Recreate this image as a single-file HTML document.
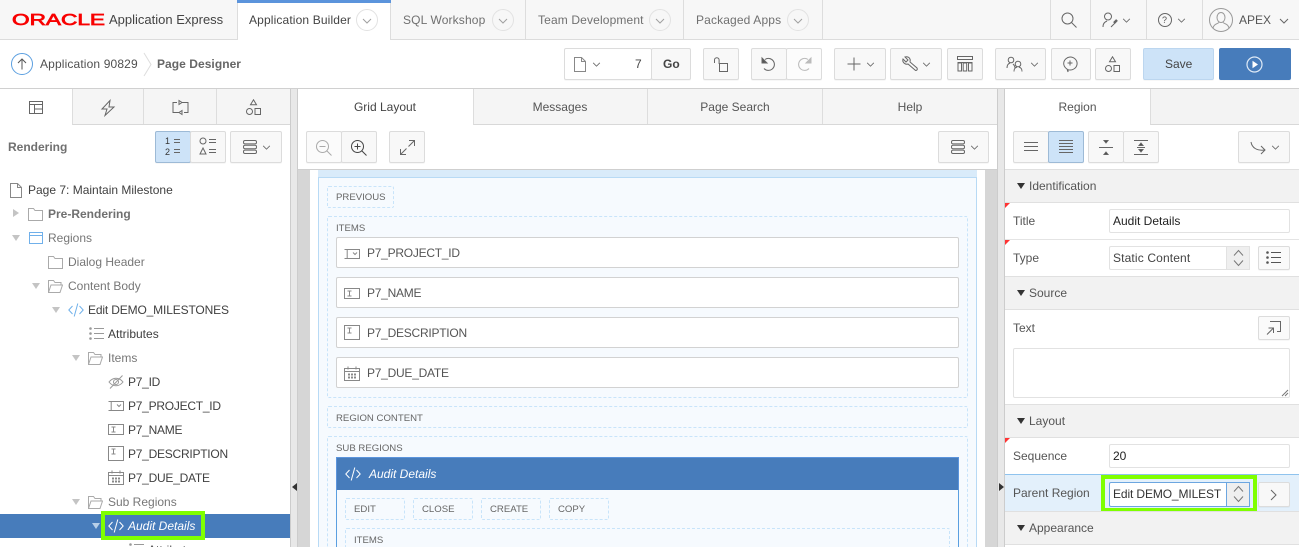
<!DOCTYPE html>
<html><head><meta charset="utf-8"><title>Page Designer</title>
<style>
*{box-sizing:border-box}
html,body{margin:0;padding:0;width:1299px;height:547px;overflow:hidden;background:#fff}
body{position:relative;font-family:"Liberation Sans",sans-serif;font-size:12px;color:#404040}
.a,.t,.b,svg.i,.d{position:absolute}
.a{display:block}
.t{white-space:nowrap;line-height:16px;height:16px}
.b{background:#f8f8f8;border:1px solid #dcdcdc;border-radius:2px;box-shadow:0 1px 0 rgba(0,0,0,.03)}
.on{background:#cde3f8;border-color:#9dbad6}
svg.i{fill:none;stroke:#666;stroke-width:1;overflow:visible}
.d{border:1px dashed #c8e4fa;border-radius:2px}
.l{position:absolute;font-size:9.6px;line-height:12px;color:#666;white-space:nowrap}
.tab{position:absolute;text-align:center;line-height:16px;color:#555}
.arr{position:absolute;width:0;height:0}
.dn{border-left:4.5px solid transparent;border-right:4.5px solid transparent;border-top:6px solid #c4c4c4}
.rt{border-top:4.5px solid transparent;border-bottom:4.5px solid transparent;border-left:6px solid #c4c4c4}
.tr{color:#404040}.gr{color:#777}
.cap{letter-spacing:-.25px}
.nav{letter-spacing:.14px}
.row{position:absolute;left:336px;width:623px;height:31px;background:#fff;border:1px solid #d2d2d2;border-radius:2px}
.sec{position:absolute;left:1005px;width:294px;height:34px;background:#f2f2f2;border-top:1px solid #e0e0e0;border-bottom:1px solid #e0e0e0}
.sect{position:absolute;left:1029px;color:#555;line-height:16px}
.sa{position:absolute;left:1017px;border-left:4px solid transparent;border-right:4px solid transparent;border-top:6px solid #333;width:0;height:0}
.in{position:absolute;background:#fff;border:1px solid #e2e2e2;border-radius:2px;height:24px;line-height:22px;padding-left:3px;color:#222}
.lab{position:absolute;left:1013px;color:#555;line-height:16px}
.red{position:absolute;left:1005px;width:0;height:0;border-top:5px solid #f33;border-right:5px solid transparent}
.lite{color:#a0a0a0}
.drk{color:#666}
</style></head><body>

<svg width="0" height="0" style="position:absolute">
<defs>
<symbol id="chev" viewBox="0 0 10 6"><path d="M1 1l4 4 4-4" fill="none" stroke="currentColor"/></symbol>
<symbol id="page" viewBox="0 0 12 15"><path d="M.5.5h7l4 4v10H.5zM7.500.5v4h4" fill="none" stroke="#888"/></symbol>
<symbol id="folder" viewBox="0 0 15 13"><path d="M.5 12.500V.5h5l1.500 2h7.500v10z" fill="none" stroke="#aaa"/></symbol>
<symbol id="ofolder" viewBox="0 0 15 13"><path d="M.5 12.500V.5h5l1.500 2h6v2.500M.5 12.500l2.500-7.500h11.500l-2.500 7.500z" fill="none" stroke="#aaa"/></symbol>
<symbol id="code" viewBox="0 0 16 14"><path d="M4.500 3L.8 7l3.700 4M11.500 3l3.700 4-3.700 4M9.800.5L6.200 13.500" fill="none" stroke="currentColor"/></symbol>
<symbol id="list" viewBox="0 0 15 13"><path d="M5 1.500h10M5 6.500h10M5 11.500h10" fill="none" stroke="currentColor"/><circle cx="1.500" cy="1.500" r="1.300" fill="currentColor"/><circle cx="1.500" cy="6.500" r="1.300" fill="currentColor"/><circle cx="1.500" cy="11.500" r="1.300" fill="currentColor"/></symbol>
<symbol id="sel" viewBox="0 0 16 10"><path d="M6 .5h9.500v9H6" fill="none" stroke="#888"/><path d="M.5.5h5.500M3.200.5v9M.5 9.500h5.500" fill="none" stroke="#888"/><path d="M9 3.500l2 2 2-2" fill="none" stroke="#888"/></symbol>
<symbol id="txt" viewBox="0 0 16 11"><path d="M.5.5h15v10H.5z" fill="none" stroke="#888"/><path d="M3.500 3h4M5.500 3v5M3.500 8h4" fill="none" stroke="#888"/></symbol>
<symbol id="ta" viewBox="0 0 16 15"><path d="M.5.5h15v14H.5z" fill="none" stroke="#888"/><path d="M3.500 3h4M5.500 3v5M3.500 8h4" fill="none" stroke="#888"/></symbol>
<symbol id="cal" viewBox="0 0 16 15"><path d="M.5 2.500h15v12H.5zM.5 5.500h15M4 .5v3M12 .5v3" fill="none" stroke="#888"/><path d="M4 7.500h2v2H4zM7 7.500h2v2H7zM10 7.500h2v2h-2zM4 10.500h2v2H4zM7 10.500h2v2H7zM10 10.500h2v2h-2z" fill="#888"/></symbol>
<symbol id="stack" viewBox="0 0 14 14"><rect x=".5" y=".5" width="13" height="3.400" rx="1.500" fill="none" stroke="#666"/><rect x=".5" y="5.300" width="13" height="3.400" rx="1.500" fill="none" stroke="#666"/><rect x=".5" y="10.100" width="13" height="3.400" rx="1.500" fill="none" stroke="#666"/></symbol>
<symbol id="shapes" viewBox="0 0 15 16"><path d="M7.500.8l3 5h-6zM9 9.500h5.500v6H9z" fill="none" stroke="#666"/><circle cx="3.500" cy="12.500" r="3" fill="none" stroke="#666"/></symbol>
<symbol id="updn" viewBox="0 0 11 18"><path d="M1 6.500l4.500-5 4.500 5M1 11.500l4.500 5 4.500-5" fill="none" stroke="#777"/></symbol>
</defs>
</svg>

<!-- top bar -->
<div class="a" style="left:0;top:0;width:1299px;height:40px;background:#f7f7f7;border-bottom:1px solid #dcdcdc"></div>
<svg class="a" style="left:12px;top:10px" width="95" height="18"><text x="0" y="15" textLength="93" lengthAdjust="spacingAndGlyphs" style="font-family:'Liberation Sans',sans-serif" font-size="15.500" fill="#f80000" stroke="#f80000" stroke-width=".7">ORACLE</text></svg>
<div class="t" style="left:109px;top:12px;font-size:13px;color:#444">Application Express</div>
<div class="a" style="left:237px;top:0;width:154px;height:40px;background:#fff;border-left:1px solid #ddd;border-right:1px solid #ddd"></div>
<div class="a" style="left:237px;top:0;width:154px;height:3px;background:#5b94dc"></div>
<div class="t nav" style="left:249px;top:12px;color:#444">Application Builder</div>
<div class="a" style="left:356px;top:9px;width:22px;height:22px;border:1px solid #e2e2e2;border-radius:50%"></div>
<svg class="a lite" style="left:362px;top:18px" width="10" height="6"><use href="#chev"/></svg>
<div class="t nav" style="left:403px;top:12px;color:#707070">SQL Workshop</div>
<div class="a" style="left:492px;top:9px;width:22px;height:22px;border:1px solid #e2e2e2;border-radius:50%"></div>
<svg class="a lite" style="left:498px;top:18px" width="10" height="6"><use href="#chev"/></svg>
<div class="a" style="left:525px;top:0;width:1px;height:39px;background:#ddd"></div>
<div class="t nav" style="left:538px;top:12px;color:#707070">Team Development</div>
<div class="a" style="left:649px;top:9px;width:22px;height:22px;border:1px solid #e2e2e2;border-radius:50%"></div>
<svg class="a lite" style="left:655px;top:18px" width="10" height="6"><use href="#chev"/></svg>
<div class="a" style="left:683px;top:0;width:1px;height:39px;background:#ddd"></div>
<div class="t nav" style="left:696px;top:12px;color:#707070">Packaged Apps</div>
<div class="a" style="left:787px;top:9px;width:22px;height:22px;border:1px solid #e2e2e2;border-radius:50%"></div>
<svg class="a lite" style="left:793px;top:18px" width="10" height="6"><use href="#chev"/></svg>
<div class="a" style="left:822px;top:0;width:1px;height:39px;background:#ddd"></div>
<div class="a" style="left:1050px;top:0;width:1px;height:39px;background:#ddd"></div>
<div class="a" style="left:1090px;top:0;width:1px;height:39px;background:#ddd"></div>
<div class="a" style="left:1146px;top:0;width:1px;height:39px;background:#ddd"></div>
<div class="a" style="left:1202px;top:0;width:1px;height:39px;background:#ddd"></div>
<svg class="i" style="left:1061px;top:12px" width="16" height="16"><circle cx="6.500" cy="6.500" r="5.500"/><path d="M10.500 10.500l5 5"/></svg>
<svg class="i" style="left:1102px;top:12px" width="18" height="17"><circle cx="6" cy="4.500" r="3.500"/><path d="M1 15c0-4 2-5 4-6M9 15l5-5"/><path d="M12 11l3-3" stroke-width="2.500"/></svg>
<svg class="a drk" style="left:1122px;top:18px" width="9" height="5"><use href="#chev"/></svg>
<svg class="i" style="left:1158px;top:13px" width="14" height="14"><circle cx="7" cy="7" r="6.500"/></svg>
<div class="t" style="left:1162px;top:12px;font-size:9px;color:#555">?</div>
<svg class="a drk" style="left:1177px;top:18px" width="9" height="5"><use href="#chev"/></svg>
<svg class="i" style="left:1209px;top:8px;stroke:#999" width="24" height="24"><circle cx="12" cy="12" r="11.500"/><ellipse cx="12" cy="9.500" rx="4" ry="5"/><path d="M4 20c1-4 4-4 6-5.500M20 20c-1-4-4-4-6-5.500"/></svg>
<div class="t" style="left:1239px;top:12px;color:#555">APEX</div>
<svg class="a drk" style="left:1279px;top:18px" width="10" height="6"><use href="#chev"/></svg>

<!-- toolbar -->
<div class="a" style="left:0;top:40px;width:1299px;height:49px;background:#fff;border-bottom:1px solid #d0d0d0"></div>
<svg class="i" style="left:11px;top:53px;stroke:#5b9fe0" width="22" height="22"><circle cx="11" cy="11" r="10.500"/><path d="M11 16.500V6M7 10l4-4 4 4" style="stroke:#555"/></svg>
<div class="t nav" style="left:40px;top:56px;color:#505050">Application 90829</div>
<svg class="i" style="left:143px;top:52px;stroke:#ddd" width="10" height="25"><path d="M1 1l7 11.500L1 24"/></svg>
<div class="t" style="left:157px;top:56px;color:#666;font-weight:bold;letter-spacing:.05px">Page Designer</div>

<div class="b" style="left:564px;top:48px;width:88px;height:32px;background:#fff"></div>
<svg class="a" style="left:574px;top:57px" width="12" height="15"><use href="#page"/></svg>
<svg class="a drk" style="left:592px;top:62px" width="9" height="5"><use href="#chev"/></svg>
<div class="t" style="left:635px;top:56px;color:#444">7</div>
<div class="b" style="left:651px;top:48px;width:40px;height:32px"></div>
<div class="t" style="left:663px;top:56px;font-weight:bold;color:#444">Go</div>

<div class="b" style="left:703px;top:48px;width:36px;height:32px"></div>
<svg class="i" style="left:713px;top:57px" width="16" height="15"><path d="M6.500 6.500h8v8h-8zM1.500 6V3a2.300 2.300 0 014.600 0v4"/></svg>
<div class="b" style="left:751px;top:48px;width:36px;height:32px"></div>
<svg class="i" style="left:761px;top:57px" width="16" height="16"><path d="M4 2.500a6 6 0 11-1 9"/><path d="M1 1v5h5z" fill="#555"/></svg>
<div class="b" style="left:786px;top:48px;width:36px;height:32px;background:#fcfcfc"></div>
<svg class="i" style="left:796px;top:57px;stroke:#bbb" width="16" height="16"><path d="M12 2.500a6 6 0 101 9"/><path d="M15 1v5h-5z" fill="#bbb"/></svg>

<div class="b" style="left:834px;top:48px;width:52px;height:32px"></div>
<svg class="i" style="left:847px;top:57px" width="14" height="14"><path d="M7 .5v13M.5 7h13"/></svg>
<svg class="a drk" style="left:866px;top:62px" width="9" height="5"><use href="#chev"/></svg>
<div class="b" style="left:890px;top:48px;width:52px;height:32px"></div>
<svg class="i" style="left:902px;top:56px" width="16" height="16"><path d="M1 3l3 3 2-2-3-3c3-1 6 1 5 5l7 6c1 2-1 3-2 2L6 8C3 9 0 6 1 3z"/></svg>
<svg class="a drk" style="left:922px;top:62px" width="9" height="5"><use href="#chev"/></svg>
<div class="b" style="left:947px;top:48px;width:36px;height:32px"></div>
<svg class="i" style="left:957px;top:56px" width="16" height="16"><path d="M.5.500h15v3H.5zM.5 6.500h15M1 7h3.500v8H1zM6.200 7h3.500v8H6.200zM11.500 7H15v8h-3.500z"/></svg>

<div class="b" style="left:995px;top:48px;width:51px;height:32px"></div>
<svg class="i" style="left:1006px;top:56px" width="18" height="16"><circle cx="5" cy="4" r="2.800"/><path d="M1 12c0-3 1-4 3-5M9 12c0-1-1-3-2-4"/><circle cx="12" cy="8" r="2.800"/><path d="M8 15.500c0-3 1-3.500 3-4.500M16 15.500c0-3-1-3.500-3-4.500"/></svg>
<svg class="a drk" style="left:1030px;top:62px" width="9" height="5"><use href="#chev"/></svg>
<div class="b" style="left:1051px;top:48px;width:40px;height:32px"></div>
<svg class="i" style="left:1062px;top:56px" width="16" height="17"><path d="M8 1a7 6.500 0 11-2 12.700L6 16l-1-3A7 6.500 0 018 1zM8 4.500v5M5.500 7h5"/></svg>
<div class="b" style="left:1095px;top:48px;width:36px;height:32px"></div>
<svg class="a" style="left:1105px;top:56px" width="15" height="16"><use href="#shapes"/></svg>
<div class="b" style="left:1143px;top:48px;width:71px;height:32px;background:#cde3f8;border-color:#bcd6ef"></div>
<div class="t" style="left:1165px;top:56px;color:#444">Save</div>
<div class="b" style="left:1219px;top:48px;width:72px;height:32px;background:#477cbb;border-color:#477cbb"></div>
<svg class="a" style="left:1246px;top:56px" width="17" height="17"><circle cx="8.500" cy="8.500" r="7.500" fill="none" stroke="#dfeaf6" stroke-width="1.200"/><path d="M6.500 4.800l5.500 3.700-5.500 3.700z" fill="#fff"/></svg>

<!-- left panel -->
<div class="a" style="left:72px;top:89px;width:218px;height:36px;background:#f5f5f5;border-bottom:1px solid #d8d8d8;border-left:1px solid #ddd"></div>
<div class="a" style="left:143px;top:89px;width:1px;height:35px;background:#ddd"></div>
<div class="a" style="left:216px;top:89px;width:1px;height:35px;background:#ddd"></div>
<svg class="i" style="left:29px;top:101px" width="14" height="13"><path d="M.5.500h13v12H.5zM.5 3.500h13M5.500 3.500v9M5.500 8h8"/></svg>
<svg class="i" style="left:101px;top:100px" width="14" height="16"><path d="M9 .5L1 9h5l-2 6.500L13 7H8z"/></svg>
<svg class="i" style="left:172px;top:100px" width="17" height="15"><path d="M5 2.500H1v10h6M12 12.500h4v-10h-6M7 .5v4l3-2zM10 10.500v4l-3-2z"/></svg>
<svg class="a" style="left:246px;top:99px" width="15" height="16"><use href="#shapes"/></svg>
<div class="t" style="left:8px;top:139px;font-weight:bold;color:#707070">Rendering</div>
<div class="b on" style="left:155px;top:131px;width:36px;height:32px"></div>
<div class="t" style="left:165px;top:136px;font-size:9px;line-height:11px;height:24px;color:#333">1<br>2</div>
<svg class="i" style="left:173px;top:139px" width="8" height="16"><path d="M1 .5h6M1 3.500h6M1 10.500h6M1 13.500h6"/></svg>
<div class="b" style="left:190px;top:131px;width:36px;height:32px"></div>
<svg class="i" style="left:199px;top:138px" width="19" height="17"><circle cx="4" cy="3" r="3"/><path d="M4 10l3 6H1zM10 1.500h7M10 4.500h7M10 11.500h7M10 14.500h7"/></svg>
<div class="b" style="left:230px;top:131px;width:52px;height:32px"></div>
<svg class="a" style="left:243px;top:140px" width="14" height="14"><use href="#stack"/></svg>
<svg class="a drk" style="left:262px;top:145px" width="9" height="5"><use href="#chev"/></svg>

<!-- left/center divider -->
<div class="a" style="left:290px;top:89px;width:8px;height:458px;background:#e8e8e8;border-left:1px solid #ccc;border-right:1px solid #ccc"></div>
<div class="arr" style="left:292px;top:483px;border-top:4.500px solid transparent;border-bottom:4.500px solid transparent;border-right:5px solid #333"></div>

<!-- tree -->
<svg class="a" style="left:10px;top:183px" width="12" height="15"><use href="#page"/></svg>
<div class="t tr" style="left:28px;top:182px">Page 7: Maintain Milestone</div>
<div class="arr rt" style="left:13px;top:209px"></div>
<svg class="a" style="left:28px;top:208px" width="15" height="13"><use href="#folder"/></svg>
<div class="t" style="left:48px;top:206px;font-weight:bold;color:#707070">Pre-Rendering</div>
<div class="arr dn" style="left:12px;top:235px"></div>
<svg class="i" style="left:29px;top:232px;stroke:#70b0ea" width="15" height="12"><path d="M.5.500h13v11H.5zM.5 3.500h13"/></svg>
<div class="t gr" style="left:48px;top:230px">Regions</div>
<svg class="a" style="left:48px;top:256px" width="15" height="13"><use href="#folder"/></svg>
<div class="t gr" style="left:68px;top:254px">Dialog Header</div>
<div class="arr dn" style="left:32px;top:283px"></div>
<svg class="a" style="left:48px;top:280px" width="15" height="13"><use href="#ofolder"/></svg>
<div class="t gr" style="left:68px;top:278px">Content Body</div>
<div class="arr dn" style="left:52px;top:307px"></div>
<svg class="a" style="left:68px;top:303px;color:#6fb0ea" width="16" height="14"><use href="#code"/></svg>
<div class="t tr" style="left:88px;top:302px;letter-spacing:-.15px">Edit DEMO_MILESTONES</div>
<svg class="a" style="left:89px;top:327px;color:#999" width="15" height="13"><use href="#list"/></svg>
<div class="t tr" style="left:108px;top:326px">Attributes</div>
<div class="arr dn" style="left:72px;top:355px"></div>
<svg class="a" style="left:88px;top:352px" width="15" height="13"><use href="#ofolder"/></svg>
<div class="t gr" style="left:108px;top:350px">Items</div>
<svg class="i" style="left:108px;top:375px;stroke:#999" width="16" height="14"><path d="M1 7c4-5 10-5 14 0-4 5-10 5-14 0z"/><circle cx="8" cy="7" r="2.500"/><path d="M2 13.500L14.500.5"/></svg>
<div class="t tr cap" style="left:128px;top:374px">P7_ID</div>
<svg class="a" style="left:108px;top:401px" width="16" height="10"><use href="#sel"/></svg>
<div class="t tr cap" style="left:128px;top:398px">P7_PROJECT_ID</div>
<svg class="a" style="left:108px;top:424px" width="16" height="11"><use href="#txt"/></svg>
<div class="t tr cap" style="left:128px;top:422px">P7_NAME</div>
<svg class="a" style="left:108px;top:446px" width="16" height="15"><use href="#ta"/></svg>
<div class="t tr cap" style="left:128px;top:446px">P7_DESCRIPTION</div>
<svg class="a" style="left:108px;top:470px" width="16" height="15"><use href="#cal"/></svg>
<div class="t tr cap" style="left:128px;top:470px">P7_DUE_DATE</div>
<div class="arr dn" style="left:72px;top:499px"></div>
<svg class="a" style="left:88px;top:496px" width="15" height="13"><use href="#ofolder"/></svg>
<div class="t gr" style="left:108px;top:494px">Sub Regions</div>
<div class="a" style="left:0;top:514px;width:290px;height:24px;background:#477cbb"></div>
<div class="arr dn" style="left:92px;top:523px;border-top-color:#b8cfe8"></div>
<svg class="a" style="left:108px;top:519px;color:#fff" width="16" height="14"><use href="#code"/></svg>
<div class="t" style="left:128px;top:518px;color:#fff;font-style:italic">Audit Details</div>
<div class="a" style="left:101px;top:511px;width:104px;height:29px;border:4px solid #7fff00"></div>
<svg class="a" style="left:129px;top:543px;color:#999" width="15" height="13"><use href="#list"/></svg>
<div class="t tr" style="left:148px;top:542px;color:#555">Attributes</div>

<!-- center panel -->
<div class="a" style="left:473px;top:89px;width:524px;height:36px;background:#f5f5f5;border-bottom:1px solid #d8d8d8;border-left:1px solid #ddd"></div>
<div class="a" style="left:647px;top:89px;width:1px;height:35px;background:#ddd"></div>
<div class="a" style="left:822px;top:89px;width:1px;height:35px;background:#ddd"></div>
<div class="tab" style="left:298px;top:99px;width:174px;color:#444">Grid Layout</div>
<div class="tab" style="left:473px;top:99px;width:174px">Messages</div>
<div class="tab" style="left:648px;top:99px;width:174px">Page Search</div>
<div class="tab" style="left:823px;top:99px;width:174px">Help</div>

<div class="b" style="left:306px;top:131px;width:36px;height:32px;background:#fbfbfb"></div>
<svg class="i" style="left:316px;top:140px;stroke:#aaa" width="16" height="16"><circle cx="6.500" cy="6.500" r="6"/><path d="M3.500 6.500h6M11 11l4.500 4.500"/></svg>
<div class="b" style="left:341px;top:131px;width:36px;height:32px"></div>
<svg class="i" style="left:351px;top:140px;stroke:#444" width="16" height="16"><circle cx="6.500" cy="6.500" r="6"/><path d="M3.500 6.500h6M6.500 3.500v6M11 11l4.500 4.500"/></svg>
<div class="b" style="left:389px;top:131px;width:36px;height:32px"></div>
<svg class="i" style="left:400px;top:140px" width="15" height="15"><path d="M14 1L8.500 6.500M9 .5h5.500V6M1 14l5.500-5.500M.5 9v5.500H6"/></svg>
<div class="b" style="left:938px;top:131px;width:51px;height:32px"></div>
<svg class="a" style="left:951px;top:140px" width="14" height="14"><use href="#stack"/></svg>
<svg class="a drk" style="left:970px;top:145px" width="9" height="5"><use href="#chev"/></svg>

<div class="a" style="left:298px;top:169px;width:699px;height:378px;background:#fff;border-top:1px solid #cfcfcf;overflow:hidden"></div>
<div class="a" style="left:298px;top:170px;width:12px;height:377px;background:#d6d6d6"></div>
<div class="a" style="left:985px;top:170px;width:12px;height:377px;background:#d6d6d6"></div>

<div class="a" style="left:318px;top:170px;width:659px;height:377px;background:#f6fafe;border-left:1px solid #b8daf5;border-right:1px solid #b8daf5"></div>
<div class="a" style="left:318px;top:170px;width:659px;height:8px;background:#d9ebfa;border-bottom:1px solid #b8daf5"></div>

<div class="d" style="left:327px;top:186px;width:67px;height:22px"></div>
<div class="l" style="left:336px;top:192px">PREVIOUS</div>
<div class="d" style="left:327px;top:216px;width:641px;height:182px"></div>
<div class="l" style="left:336px;top:223px">ITEMS</div>
<div class="row" style="top:237px"></div>
<svg class="a" style="left:344px;top:249px" width="16" height="10"><use href="#sel"/></svg>
<div class="t cap" style="left:367px;top:245px;color:#555">P7_PROJECT_ID</div>
<div class="row" style="top:277px"></div>
<svg class="a" style="left:344px;top:288px" width="16" height="11"><use href="#txt"/></svg>
<div class="t cap" style="left:367px;top:285px;color:#555">P7_NAME</div>
<div class="row" style="top:317px"></div>
<svg class="a" style="left:344px;top:325px" width="16" height="15"><use href="#ta"/></svg>
<div class="t cap" style="left:367px;top:325px;color:#555">P7_DESCRIPTION</div>
<div class="row" style="top:357px"></div>
<svg class="a" style="left:344px;top:366px" width="16" height="15"><use href="#cal"/></svg>
<div class="t cap" style="left:367px;top:365px;color:#555">P7_DUE_DATE</div>

<div class="d" style="left:327px;top:406px;width:641px;height:22px"></div>
<div class="l" style="left:336px;top:413px">REGION CONTENT</div>
<div class="d" style="left:327px;top:436px;width:641px;height:130px"></div>
<div class="l" style="left:336px;top:443px">SUB REGIONS</div>
<div class="a" style="left:336px;top:457px;width:623px;height:100px;background:#f6fafe;border:1px solid #5b9fe0"></div>
<div class="a" style="left:336px;top:457px;width:623px;height:33px;background:#477cbb;border:1px solid #5b94dc;border-bottom:0"></div>
<svg class="a" style="left:345px;top:467px;color:#fff" width="16" height="14"><use href="#code"/></svg>
<div class="t" style="left:369px;top:466px;color:#fff;font-style:italic">Audit Details</div>
<div class="d" style="left:345px;top:498px;width:60px;height:22px"></div><div class="l" style="left:354px;top:504px">EDIT</div>
<div class="d" style="left:413px;top:498px;width:60px;height:22px"></div><div class="l" style="left:422px;top:504px">CLOSE</div>
<div class="d" style="left:481px;top:498px;width:60px;height:22px"></div><div class="l" style="left:490px;top:504px">CREATE</div>
<div class="d" style="left:549px;top:498px;width:60px;height:22px"></div><div class="l" style="left:558px;top:504px">COPY</div>
<div class="d" style="left:345px;top:528px;width:605px;height:40px"></div><div class="l" style="left:354px;top:535px">ITEMS</div>

<!-- center/right divider -->
<div class="a" style="left:997px;top:89px;width:8px;height:458px;background:#e8e8e8;border-left:1px solid #ccc;border-right:1px solid #ccc"></div>
<div class="arr" style="left:999px;top:483px;border-top:4.500px solid transparent;border-bottom:4.500px solid transparent;border-left:5px solid #333"></div>

<!-- right panel -->
<div class="a" style="left:1150px;top:89px;width:149px;height:36px;background:#f3f3f3;border-bottom:1px solid #d8d8d8;border-left:1px solid #ddd"></div>
<div class="tab" style="left:1005px;top:99px;width:145px">Region</div>
<div class="b" style="left:1013px;top:131px;width:36px;height:32px"></div>
<svg class="i" style="left:1023px;top:142px" width="16" height="10"><path d="M1 .5h14M1 4.500h14M1 8.500h14"/></svg>
<div class="b on" style="left:1048px;top:131px;width:36px;height:32px"></div>
<svg class="i" style="left:1058px;top:140px" width="16" height="14"><path d="M1 .5h14M1 3.500h14M1 6.500h14M1 9.500h14M1 12.500h14"/></svg>
<div class="b" style="left:1088px;top:131px;width:36px;height:32px"></div>
<svg class="i" style="left:1098px;top:140px" width="16" height="15"><path d="M1 7.500h14"/><path d="M6 .5h4L8 3zM6 14.500h4L8 12z" fill="#444"/></svg>
<div class="b" style="left:1123px;top:131px;width:36px;height:32px"></div>
<svg class="i" style="left:1133px;top:140px" width="16" height="15"><path d="M1 .5h14M1 14.500h14M4 7.500h8"/><path d="M6 5.500h4L8 3zM6 9.500h4L8 12z" fill="#444"/></svg>
<div class="b" style="left:1238px;top:131px;width:52px;height:32px"></div>
<svg class="i" style="left:1250px;top:141px" width="16" height="15"><path d="M1 1c1 6 6 9 14 8M11 5l4 4-4 4"/></svg>
<svg class="a drk" style="left:1271px;top:145px" width="9" height="5"><use href="#chev"/></svg>

<div class="sec" style="top:169px"></div><div class="sa" style="top:183px"></div><div class="sect" style="top:178px">Identification</div>
<div class="red" style="top:203px"></div>
<div class="lab" style="top:213px">Title</div>
<div class="in" style="left:1109px;top:209px;width:181px">Audit Details</div>
<div class="a" style="left:1005px;top:239px;width:294px;height:1px;background:#e4e4e4"></div>
<div class="red" style="top:240px"></div>
<div class="lab" style="top:250px">Type</div>
<div class="in" style="left:1109px;top:246px;width:141px;color:#444;letter-spacing:.14px">Static Content</div>
<div class="a" style="left:1226px;top:246px;width:24px;height:24px;background:#efefef;border:1px solid #e2e2e2"></div>
<svg class="a" style="left:1233px;top:249px" width="11" height="18"><use href="#updn"/></svg>
<div class="b" style="left:1258px;top:246px;width:32px;height:24px;background:#fafafa"></div>
<svg class="a" style="left:1266px;top:251px;color:#555" width="15" height="13"><use href="#list"/></svg>
<div class="sec" style="top:276px"></div><div class="sa" style="top:290px"></div><div class="sect" style="top:285px">Source</div>
<div class="lab" style="top:320px">Text</div>
<div class="b" style="left:1258px;top:316px;width:32px;height:24px;background:#fafafa"></div>
<svg class="i" style="left:1266px;top:321px" width="15" height="14"><path d="M4 .5h10.500v10H11M1 13.500L7 7.500M2.500 7H7.500v5"/></svg>
<div class="a" style="left:1013px;top:348px;width:277px;height:50px;background:#fff;border:1px solid #e2e2e2;border-radius:2px"></div>
<svg class="i" style="left:1281px;top:389px;stroke:#777" width="8" height="8"><path d="M1 7l6-6M4 7l3-3"/></svg>
<div class="sec" style="top:404px"></div><div class="sa" style="top:418px"></div><div class="sect" style="top:413px">Layout</div>
<div class="red" style="top:438px"></div>
<div class="lab" style="top:448px">Sequence</div>
<div class="in" style="left:1109px;top:444px;width:181px">20</div>
<div class="a" style="left:1005px;top:474px;width:294px;height:38px;background:#e3f0fb;border-top:1px solid #8fc3ee;border-bottom:1px solid #8fc3ee"></div>
<div class="lab" style="top:485px">Parent Region</div>
<div class="in" style="left:1109px;top:482px;width:141px;height:25px;overflow:hidden;border-color:#6ca6e0;color:#333;letter-spacing:-.12px">Edit DEMO_MILEST</div>
<div class="a" style="left:1226px;top:482px;width:24px;height:25px;background:#efefef;border:1px solid #6ca6e0"></div>
<svg class="a" style="left:1233px;top:485px" width="11" height="18"><use href="#updn"/></svg>
<div class="b" style="left:1258px;top:482px;width:32px;height:25px"></div>
<svg class="i" style="left:1270px;top:489px;stroke:#666" width="8" height="12"><path d="M1 1l5 5-5 5"/></svg>
<div class="a" style="left:1101px;top:475px;width:156px;height:37px;border:4px solid #7fff00"></div>
<div class="sec" style="top:511px"></div><div class="sa" style="top:525px"></div><div class="sect" style="top:520px">Appearance</div>

</body></html>
